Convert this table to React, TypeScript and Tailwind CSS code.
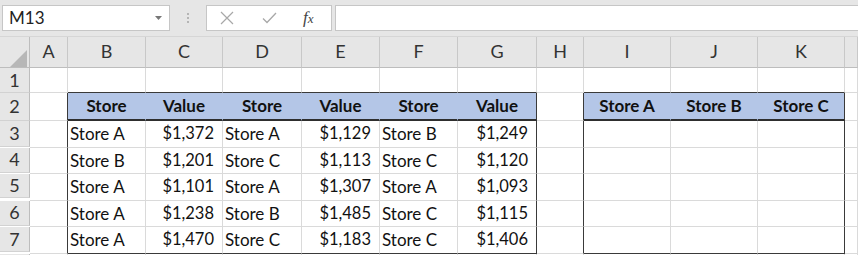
import React from 'react';

// Worksheet layout: column widths and row heights of the visible range
const COLS = ['A', 'B', 'C', 'D', 'E', 'F', 'G', 'H', 'I', 'J', 'K', ''];

const HEADERS = ['Store', 'Value', 'Store', 'Value', 'Store', 'Value'];
const ROWS = [
  ['Store A', '$1,372', 'Store A', '$1,129', 'Store B', '$1,249'],
  ['Store B', '$1,201', 'Store C', '$1,113', 'Store C', '$1,120'],
  ['Store A', '$1,101', 'Store A', '$1,307', 'Store A', '$1,093'],
  ['Store A', '$1,238', 'Store B', '$1,485', 'Store C', '$1,115'],
  ['Store A', '$1,470', 'Store C', '$1,183', 'Store C', '$1,406'],
];
const SUMMARY = ['Store A', 'Store B', 'Store C'];

const ROW_HEIGHTS = ['h-[25px]', 'h-[28px]', 'h-[26px]', 'h-[25px]', 'h-[24px]', 'h-[25px]', 'h-[25px]', 'h-[25px]'];

const inMain = (c: number) => c >= 1 && c <= 6;
const inSummary = (c: number) => c >= 8 && c <= 10;
const inTable = (c: number) => inMain(c) || inSummary(c);

// rows are 1-based worksheet rows, columns 0-based from A
function cellText(r: number, c: number): { text: string; kind: 'head' | 'store' | 'value' | '' } {
  if (r === 2 && inMain(c)) return { text: HEADERS[c - 1], kind: 'head' };
  if (r === 2 && inSummary(c)) return { text: SUMMARY[c - 8], kind: 'head' };
  if (r >= 3 && r <= 7 && inMain(c)) {
    const t = ROWS[r - 3][c - 1];
    return { text: t, kind: c % 2 === 0 ? 'value' : 'store' };
  }
  return { text: '', kind: '' };
}

function cellClass(r: number, c: number) {
  const inBody = r >= 2 && r <= 7;
  let right = 'border-r border-r-[#dadada]';
  let bottom = 'border-b border-b-[#dadada]';
  let bg = 'bg-white';

  if (inBody && (c === 0 || c === 6 || c === 7 || c === 10)) right = 'border-r border-r-[#3a3a3a]';
  if (r === 1 && inTable(c)) bottom = 'border-b border-b-[#3a3a3a]';
  if (r === 2 && inTable(c)) {
    bg = 'bg-[#b4c6e7]';
    bottom = 'border-b-2 border-b-[#2e2e2e]';
    if (c !== 6 && c !== 10) right = 'border-r border-r-[#b4c6e7]';
  }
  if (r === 7 && inTable(c)) bottom = 'border-b border-b-[#3a3a3a]';
  return `${right} ${bottom} ${bg}`;
}

function Cell({ r, c }: { r: number; c: number }) {
  const { text, kind } = cellText(r, c);
  const align =
    kind === 'head'
      ? 'justify-center font-bold text-[17px]'
      : kind === 'value'
        ? 'justify-end pr-[8px] text-[16.5px]'
        : 'justify-start pl-[2px] text-[17px]';
  return (
    <div className={`flex items-center overflow-hidden whitespace-nowrap text-[#111] ${align} ${cellClass(r, c)}`}>
      {text}
    </div>
  );
}

function Toolbar() {
  return (
    <div className="flex h-[37px] items-center border-b border-b-[#d6d6d6] bg-[#e6e6e6] pl-[2px]">
      <div className="flex h-[26px] w-[168px] items-center justify-between border border-[#c6c6c6] bg-white pl-[6px] pr-[7px] text-[17px] text-[#222]">
        <span>M13</span>
        <svg width="7" height="4" viewBox="0 0 7 4">
          <path d="M0 0h7L3.5 4z" fill="#777" />
        </svg>
      </div>
      <div className="flex w-[36px] flex-col items-center gap-[2px]">
        <span className="h-[2px] w-[2px] bg-[#b5b5b5]" />
        <span className="h-[2px] w-[2px] bg-[#b5b5b5]" />
        <span className="h-[2px] w-[2px] bg-[#b5b5b5]" />
      </div>
      <div className="flex h-[26px] w-[126px] items-center border border-[#c6c6c6] bg-white">
        <svg className="ml-[13px]" width="14" height="14" viewBox="0 0 14 14">
          <path d="M1 1l12 12M13 1L1 13" stroke="#a8a8a8" strokeWidth="1.2" fill="none" />
        </svg>
        <svg className="ml-[28px]" width="15" height="12" viewBox="0 0 15 12">
          <path d="M1 6.5l4 4L14 1" stroke="#a8a8a8" strokeWidth="1.3" fill="none" />
        </svg>
        <span className="ml-[26px] font-['Liberation_Serif',serif] text-[17px] italic text-[#444]">
          f<span className="text-[13px]">x</span>
        </span>
      </div>
      <div className="ml-[3px] h-[26px] flex-1 border border-r-0 border-[#c6c6c6] bg-white" />
    </div>
  );
}

export default function App() {
  return (
    <div className="h-[255px] w-[858px] overflow-hidden bg-white font-['Lato',sans-serif]">
      <Toolbar />
      <div className="grid grid-cols-[30px_38px_78px_77px_79px_78px_78px_79px_47px_87px_87px_87px_1fr]">
        {/* select-all corner */}
        <div className="relative h-[31px] border-b border-r border-[#bdbdbd] bg-[#e6e6e6]">
          <svg className="absolute left-[10px] top-[13px]" width="17" height="17" viewBox="0 0 17 17">
            <path d="M0 17h17V0z" fill="#b7b7b7" />
          </svg>
        </div>
        {COLS.map((l, i) => (
          <div
            key={l + i}
            className="flex h-[31px] items-end justify-center border-b border-r border-b-[#bdbdbd] border-r-[#c8c8c8] bg-[#e6e6e6] pb-[2px] text-[18px] text-[#333]"
          >
            {l}
          </div>
        ))}
        {ROW_HEIGHTS.map((h, ri) => {
          const r = ri + 1;
          return (
            <React.Fragment key={r}>
              <div
                className={`flex items-center justify-center border-b border-r border-b-[#d2d2d2] border-r-[#bdbdbd] bg-[#e6e6e6] text-[18px] text-[#333] ${h}`}
              >
                {r}
              </div>
              {COLS.map((_, c) => (
                <Cell key={c} r={r} c={c} />
              ))}
            </React.Fragment>
          );
        })}
      </div>
    </div>
  );
}
